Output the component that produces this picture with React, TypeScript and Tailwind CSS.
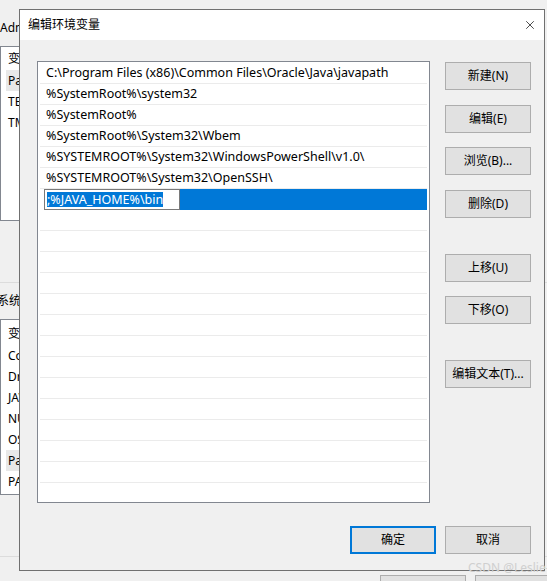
import { X } from 'lucide-react';

const pathEntries = [
  'C:\\Program Files (x86)\\Common Files\\Oracle\\Java\\javapath',
  '%SystemRoot%\\system32',
  '%SystemRoot%',
  '%SystemRoot%\\System32\\Wbem',
  '%SYSTEMROOT%\\System32\\WindowsPowerShell\\v1.0\\',
  '%SYSTEMROOT%\\System32\\OpenSSH\\',
];

const sideButtons = [
  { label: '新建(N)', gap: 'mt-[1px]' },
  { label: '编辑(E)', gap: 'mt-[15px]' },
  { label: '浏览(B)...', gap: 'mt-[14px]' },
  { label: '删除(D)', gap: 'mt-[15px]' },
  { label: '上移(U)', gap: 'mt-[36px]' },
  { label: '下移(O)', gap: 'mt-[14px]' },
  { label: '编辑文本(T)...', gap: 'mt-[36px]' },
];

const userVars = ['Path', 'TEMP', 'TMP'];
const systemVars = ['ComSpec', 'DriverData', 'JAVA_HOME', 'NUMBER_OF_PROCESSORS', 'OS', 'Path', 'PATHEXT'];

function WinButton({ label, className = '' }: { label: string; className?: string }) {
  return (
    <button className={`h-[28px] w-[86px] border border-[#adadad] bg-[#e1e1e1] text-[12px] text-black flex items-center justify-center ${className}`}>
      {label}
    </button>
  );
}

function VarRows({ rows, highlight }: { rows: string[]; highlight: string }) {
  return (
    <>
      <div className="h-[23px] pl-[7px] flex items-center">变量</div>
      {rows.map((name, i) => (
        <div
          key={i}
          className={`h-[21px] ml-[5px] pl-[2px] flex items-center ${name === highlight ? 'bg-[#e8e8e8]' : ''}`}
        >
          {name}
        </div>
      ))}
    </>
  );
}

export default function App() {
  return (
    <div className="relative w-[547px] h-[581px] overflow-hidden bg-[#f0f0f0] text-[12px] text-black font-['Noto_Sans','Noto_Sans_CJK_SC',sans-serif]">
      {/* parent window: environment variables */}
      <div className="flex flex-col w-[600px]">
        <div className="h-[46px] pt-[19px] leading-[18px] whitespace-nowrap">Administrator 的用户变量(U)</div>
        <div className="h-[175px] w-[500px] border border-[#828790] bg-white overflow-hidden">
          <VarRows rows={userVars} highlight="Path" />
        </div>
        <div className="h-[61px]" />
        <div className="h-px bg-[#dcdcdc]" />
        <div className="h-[36px] -ml-[3px] flex items-center whitespace-nowrap">系统变量(S)</div>
        <div className="h-[176px] w-[500px] border border-[#828790] bg-white pt-[2px] overflow-hidden">
          <VarRows rows={systemVars} highlight="Path" />
        </div>
        <div className="h-[61px]" />
        <div className="h-px bg-[#dcdcdc]" />
        <div className="h-[18px]" />
        <div className="flex gap-[9px] pl-[380px]">
          <WinButton label="确定" />
          <WinButton label="取消" />
        </div>
      </div>

      {/* edit dialog */}
      <div className="absolute left-[19px] top-[9px] w-[526px] h-[562px] border border-[#707070] bg-[#f0f0f0] flex flex-col">
        <div className="h-[30px] bg-white flex items-center justify-between pl-[8px] pr-[7px]">
          <span>编辑环境变量</span>
          <X size={14} strokeWidth={1.2} className="text-black" />
        </div>

        <div className="flex pt-[21px] pl-[17px] pr-[13px]">
          <div className="w-[393px] h-[442px] border border-[#828790] bg-white pt-[1px] px-[2px] overflow-hidden text-[12.5px]">
            {pathEntries.map((p, i) => (
              <div key={i} className="h-[21px] border-b border-[#ebebeb] pl-[6px] flex items-center whitespace-nowrap">
                {p}
              </div>
            ))}
            <div className="h-[21px] flex">
              <div className="w-[4px]" />
              <div className="w-[136px] h-[21px] border border-[#7a7a7a] bg-white pl-[2px] flex items-center">
                <span className="bg-[#0078d7] text-white leading-[15px]">;%JAVA_HOME%\bin</span>
              </div>
              <div className="flex-1 bg-[#0078d7]" />
            </div>
            {Array.from({ length: 14 }).map((_, i) => (
              <div key={i} className="h-[21px] border-b border-[#ebebeb]" />
            ))}
          </div>

          <div className="ml-[15px] flex flex-col">
            {sideButtons.map((b) => (
              <WinButton key={b.label} label={b.label} className={b.gap} />
            ))}
          </div>
        </div>

        <div className="flex justify-end gap-[9px] pt-[23px] pr-[13px]">
          <button className="h-[28px] w-[86px] border-2 border-[#0078d7] bg-[#e1e1e1] text-[12px] flex items-center justify-center">
            确定
          </button>
          <WinButton label="取消" />
        </div>
      </div>

      <div className="absolute left-[468px] top-[561px] text-[12px] leading-[14px] text-[#cfcfcf] whitespace-nowrap">
        CSDN @Leslie-tif
      </div>
    </div>
  );
}
